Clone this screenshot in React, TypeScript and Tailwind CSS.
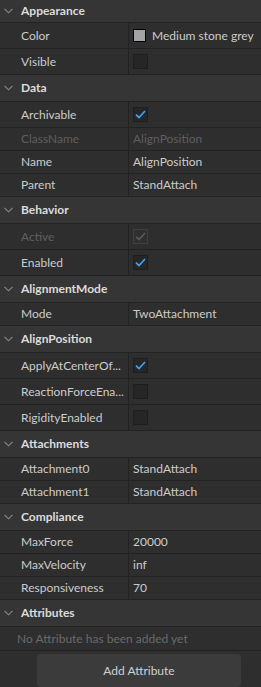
import React from "react";

type Prop =
  | { label: string; kind: "text"; value: string; disabled?: boolean }
  | { label: string; kind: "check"; checked: boolean; disabled?: boolean }
  | { label: string; kind: "color"; value: string; swatch: string };

type Section = { title: string; props: Prop[] };

const sections: Section[] = [
  {
    title: "Appearance",
    props: [
      { label: "Color", kind: "color", value: "Medium stone grey", swatch: "#a3a2a5" },
      { label: "Visible", kind: "check", checked: false },
    ],
  },
  {
    title: "Data",
    props: [
      { label: "Archivable", kind: "check", checked: true },
      { label: "ClassName", kind: "text", value: "AlignPosition", disabled: true },
      { label: "Name", kind: "text", value: "AlignPosition" },
      { label: "Parent", kind: "text", value: "StandAttach" },
    ],
  },
  {
    title: "Behavior",
    props: [
      { label: "Active", kind: "check", checked: true, disabled: true },
      { label: "Enabled", kind: "check", checked: true },
    ],
  },
  {
    title: "AlignmentMode",
    props: [{ label: "Mode", kind: "text", value: "TwoAttachment" }],
  },
  {
    title: "AlignPosition",
    props: [
      { label: "ApplyAtCenterOf...", kind: "check", checked: true },
      { label: "ReactionForceEna...", kind: "check", checked: false },
      { label: "RigidityEnabled", kind: "check", checked: false },
    ],
  },
  {
    title: "Attachments",
    props: [
      { label: "Attachment0", kind: "text", value: "StandAttach" },
      { label: "Attachment1", kind: "text", value: "StandAttach" },
    ],
  },
  {
    title: "Compliance",
    props: [
      { label: "MaxForce", kind: "text", value: "20000" },
      { label: "MaxVelocity", kind: "text", value: "inf" },
      { label: "Responsiveness", kind: "text", value: "70" },
    ],
  },
];

function Chevron() {
  return (
    <svg width="9" height="6" viewBox="0 0 9 6" className="shrink-0">
      <path d="M0.5 0.8 L4.5 4.8 L8.5 0.8" fill="none" stroke="#8a8a8a" strokeWidth="1.1" />
    </svg>
  );
}

// first header is scrolled a few pixels under the top edge
function Header({ title, first }: { title: string; first?: boolean }) {
  return (
    <div
      className={
        (first ? "h-[23px] " : "h-[27px] ") +
        "flex items-center border-b border-[#222222] bg-[#353535] pl-[4px]"
      }
    >
      <Chevron />
      <span className="ml-[8px] text-[12px] font-bold text-[#dcdcdc]">{title}</span>
    </div>
  );
}

function Check({ checked, disabled }: { checked: boolean; disabled?: boolean }) {
  return (
    <div
      className={
        disabled
          ? "flex h-[15px] w-[15px] items-center justify-center border border-[#3f3f3f] bg-[#2f2f2f]"
          : "flex h-[15px] w-[15px] items-center justify-center border border-[#1e1e1e] bg-[#262626]"
      }
    >
      {checked && (
        <svg width="11" height="9" viewBox="0 0 11 9">
          <path
            d="M1 4.6 L4 7.6 L10 1"
            fill="none"
            stroke={disabled ? "#5c5c5c" : "#3ea6ff"}
            strokeWidth="1.6"
          />
        </svg>
      )}
    </div>
  );
}

function PropRow({ p }: { p: Prop }) {
  const tall = p.kind !== "text";
  const dim = "disabled" in p && !!p.disabled;
  return (
    <div
      className={
        (tall ? "h-[26px] " : "h-[23px] ") +
        "flex border-b border-[#222222] bg-[#2e2e2e] text-[12px]"
      }
    >
      <div
        className={
          (dim ? "text-[#5f5f5f] " : "text-[#cccccc] ") +
          "flex w-[129px] shrink-0 items-center overflow-hidden whitespace-nowrap border-r border-[#222222] pl-[21px]"
        }
      >
        {p.label}
      </div>
      <div className="flex min-w-0 flex-1 items-center pl-[4px]">
        {p.kind === "check" && <Check checked={p.checked} disabled={p.disabled} />}
        {p.kind === "color" && (
          <>
            <div
              className="h-[13px] w-[13px] shrink-0 border border-black"
              style={{ backgroundColor: p.swatch }}
            />
            <span className="ml-[6px] whitespace-nowrap text-[#cccccc]">{p.value}</span>
          </>
        )}
        {p.kind === "text" && (
          <span className={(p.disabled ? "text-[#5f5f5f] " : "text-[#cccccc] ") + "whitespace-nowrap"}>
            {p.value}
          </span>
        )}
      </div>
    </div>
  );
}

export default function App() {
  return (
    <div
      className="h-[687px] w-[261px] overflow-hidden bg-[#2e2e2e]"
      style={{ fontFamily: "Lato, 'Noto Sans', sans-serif" }}
    >
      {sections.map((s, i) => (
        <div key={s.title}>
          <Header title={s.title} first={i === 0} />
          {s.props.map((p) => (
            <PropRow key={p.label} p={p} />
          ))}
        </div>
      ))}
      <Header title="Attributes" />
      <div className="flex h-[24px] items-center border-b border-[#222222] pl-[17px] text-[12px] text-[#6a6a6a]">
        No Attribute has been added yet
      </div>
      <div className="pt-[3px]">
        <button className="ml-[37px] flex h-[33px] w-[204px] items-center justify-center rounded-[4px] bg-[#3b3b3b] text-[12px] text-[#d0d0d0]">
          Add Attribute
        </button>
      </div>
    </div>
  );
}
